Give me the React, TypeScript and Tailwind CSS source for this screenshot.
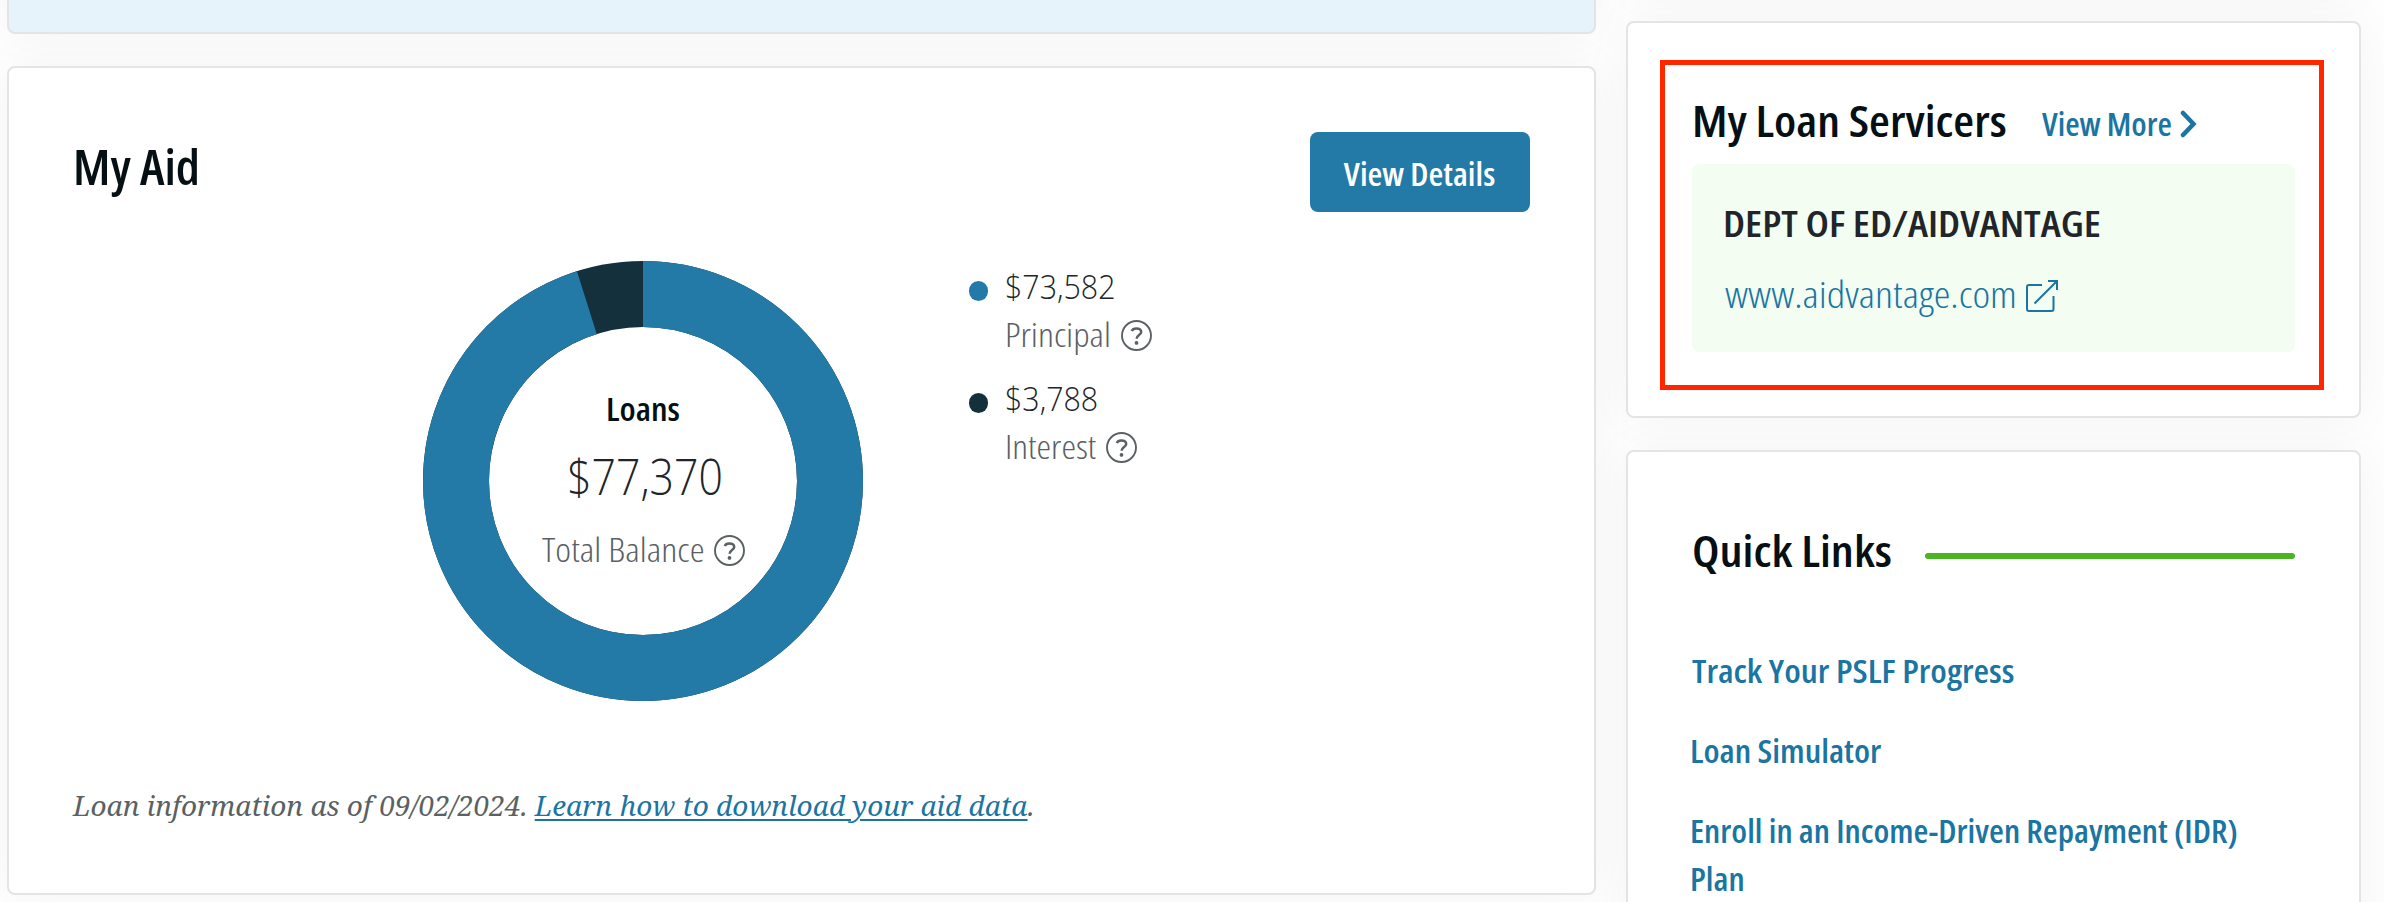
import type { ReactNode } from "react";

const principal = 73582;
const interest = 3788;
const total = principal + interest;

const RADIUS = 187;
const CIRCUMFERENCE = 2 * Math.PI * RADIUS;

const usd = (value: number) => `$${value.toLocaleString("en-US")}`;

const legend = [
  { label: "Principal", value: principal, dot: "bg-[#237aa7]", style: "w-[116px] scale-x-[1.135]", pad: "w-[116px]" },
  { label: "Interest", value: interest, dot: "bg-[#14303c]", style: "w-[101px] scale-x-[1.12]", pad: "w-[101px]" },
];

const quickLinks = [
  { title: "Track Your PSLF Progress", style: "scale-x-[1.117]" },
  { title: "Loan Simulator", style: "-ml-[2px] scale-x-[1.083]" },
  { title: "Enroll in an Income-Driven Repayment (IDR) Plan", style: "-ml-[2px] scale-x-[1.066]" },
];

function HelpIcon() {
  return (
    <svg className="h-[31px] w-[31px] shrink-0" viewBox="0 0 31 31" fill="none" stroke="#5b6163">
      <circle cx="15.5" cy="15.5" r="14.5" strokeWidth="1.9" />
      <path d="M10.8 11C11.400 9.200 13.200 8.400 15.300 8.400c2.900 0 4.900 1.300 4.900 3.500 0 3.200-4.600 3.100-4.600 6.900" strokeWidth="2.5" />
      <circle cx="15.500" cy="22.900" r="1.900" fill="#5b6163" stroke="none" />
    </svg>
  );
}

function ExternalIcon() {
  return (
    <svg className="mt-1 h-8 w-8 shrink-0" viewBox="0 0 32 32" fill="none" stroke="#1a75a3" strokeWidth="2">
      <path d="M16 5H3a2 2 0 0 0-2 2v22a2 2 0 0 0 2 2h22.500a2 2 0 0 0 2-2V16" />
      <path d="M22 1h9v9M31 1 8.500 23.500" />
    </svg>
  );
}

function Card({ className = "bg-white", children }: { className?: string; children?: ReactNode }) {
  return (
    <section
      className={`relative shrink-0 rounded-lg border-2 border-[#e4e4e4] shadow-[0_0_50px_rgba(0,0,0,0.045)] ${className}`}
    >
      {children}
    </section>
  );
}

function LoanDonut() {
  const principalArc = (principal / total) * CIRCUMFERENCE;

  return (
    <div className="relative h-[440px] w-[440px]">
      <svg className="absolute inset-0 -rotate-90" viewBox="0 0 440 440" fill="none" strokeWidth="66">
        <circle cx="220" cy="220" r={RADIUS} stroke="#14303c" />
        <circle
          cx="220"
          cy="220"
          r={RADIUS}
          stroke="#237aa7"
          strokeDasharray={`${principalArc} ${CIRCUMFERENCE}`}
        />
      </svg>
      <div className="relative flex flex-col items-center whitespace-nowrap pt-[124px]">
        <div className="scale-x-[1.09] text-[32px] leading-[48px] font-semibold text-[#050f14] font-stretch-[75%]">
          Loans
        </div>
        <div className="mt-[13px] ml-[3px] scale-x-[0.855] text-[50px] leading-[60px] font-light">{usd(total)}</div>
        <div className="mt-[20px] flex items-center gap-2 text-[#5b6163]">
          <div className="w-[164px]">
            <div className="origin-left scale-x-[1.145] text-[33px] leading-[48px] font-light font-stretch-[75%]">
              Total Balance
            </div>
          </div>
          <HelpIcon />
        </div>
      </div>
    </div>
  );
}

function MyAid() {
  return (
    <Card className="bg-white px-16 pt-16 pb-16">
      <div className="flex items-start justify-between">
        <h2 className="origin-left scale-x-[1.03] text-[49px] leading-[68px] font-semibold text-[#050f14] font-stretch-[75%]">
          My Aid
        </h2>
        <button className="h-20 w-[220px] rounded-lg bg-[#237aa7] pt-1 text-[33px] font-semibold text-white">
          <span className="inline-block scale-x-[1.03] font-stretch-[75%]">View Details</span>
        </button>
      </div>

      <div className="mt-[49px] ml-[350px] flex items-start gap-[106px]">
        <LoanDonut />
        <ul className="mt-[2px] flex flex-col gap-4">
          {legend.map((item) => (
            <li key={item.label} className="flex gap-[17px]">
              <span className={`mt-[18px] h-5 w-[19px] rounded-full ${item.dot}`} />
              <div className="text-[33px] leading-[48px] font-light">
                <div className="w-[150px] origin-left scale-x-[0.92]">{usd(item.value)}</div>
                <div className="flex items-center text-[#5b6163]">
                  <div className={item.pad}>
                    <div className={`origin-left font-stretch-[75%] ${item.style}`}>{item.label}</div>
                  </div>
                  <HelpIcon />
                </div>
              </div>
            </li>
          ))}
        </ul>
      </div>

      <p className="mt-20 font-['Noto_Serif',serif] text-[28px] leading-[48px] text-[#5b6163] italic">
        Loan information as of 09/02/2024.{" "}
        <a className="text-[#1a75a3] underline decoration-2 underline-offset-[3px]">
          Learn how to download your aid data
        </a>
        .
      </p>
    </Card>
  );
}

function LoanServicers() {
  return (
    <Card className="h-[397px] bg-white px-16 pt-[65px]">
      <div className="pointer-events-none absolute top-[37px] left-8 h-[330px] w-[664px] border-5 border-[#ff2600]" />
      <div className="flex items-baseline whitespace-nowrap font-stretch-[75%]">
        <h2 className="w-[350px] origin-left scale-x-[1.088] text-[44px] leading-[65px] font-semibold text-[#050f14]">
          My Loan Servicers
        </h2>
        <a className="flex -translate-y-px items-center text-[32px] font-semibold text-[#1a75a3]">
          <span className="w-[138px] origin-left scale-x-[1.035]">View More</span>
          <svg className="h-7 w-[18px]" viewBox="0 0 18 28" fill="none" stroke="#1a75a3" strokeWidth="4.500">
            <path d="M3 3 13.500 14 3 25" strokeLinecap="round" />
          </svg>
        </a>
      </div>
      <div className="mt-[11px] h-[188px] rounded-lg bg-[#f3fdf1] pt-[33px] pl-[31px] text-[36px] leading-[54px] whitespace-nowrap font-stretch-[75%]">
        <div className="origin-left scale-x-[1.147] font-semibold">DEPT OF ED/AIDVANTAGE</div>
        <a className="mt-4 ml-[2px] flex items-center text-[#1a75a3]">
          <span className="w-[301px] origin-left translate-y-px scale-x-[1.172] font-light">www.aidvantage.com</span>
          <ExternalIcon />
        </a>
      </div>
    </Card>
  );
}

function QuickLinks() {
  return (
    <Card className="h-[500px] bg-white px-16 pt-[66px]">
      <div className="flex items-start gap-[33px] font-stretch-[75%]">
        <h2 className="w-[200px] origin-left scale-x-[1.1] text-[44px] leading-[64px] font-semibold whitespace-nowrap text-[#050f14]">
          Quick Links
        </h2>
        <div className="mt-[35px] h-1.5 flex-1 rounded-full bg-[#4ab523]" />
      </div>
      <ul className="mt-[65px] flex w-[550px] flex-col gap-8 text-[32px] leading-[48px] font-semibold text-[#1a75a3] font-stretch-[75%]">
        {quickLinks.map((link) => (
          <li key={link.title} className={`origin-left ${link.style}`}>
            {link.title}
          </li>
        ))}
      </ul>
    </Card>
  );
}

export default function App() {
  return (
    <main className="flex h-[902px] w-full gap-[30px] overflow-hidden bg-[#fefefe] pl-[7px] font-['Open_Sans',sans-serif] text-[#212529]">
      <div className="-mt-20 flex w-[1589px] shrink-0 flex-col gap-8">
        <Card className="h-[114px] bg-[#e6f3fa]" />
        <MyAid />
      </div>
      <div className="-mt-20 flex w-[735px] shrink-0 flex-col gap-8">
        <Card className="h-[69px] bg-white" />
        <LoanServicers />
        <QuickLinks />
      </div>
    </main>
  );
}
